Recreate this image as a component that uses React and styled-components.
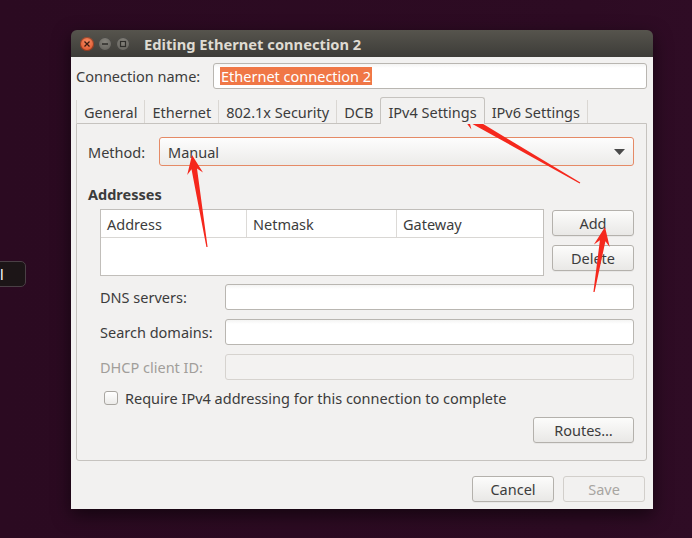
import React from "react";
import styled, { createGlobalStyle } from "styled-components";

const Global = createGlobalStyle`
  html, body { margin: 0; padding: 0; background: #2c0a22; }
  body { font-family: "Noto Sans", "DejaVu Sans", sans-serif; }
  * { box-sizing: border-box; }
`;

const Page = styled.div`
  position: relative;
  width: 692px;
  height: 538px;
  overflow: hidden;
  background: linear-gradient(90deg, #2b0a21 0%, #2d0b23 85%, #2f0c25 100%);
  padding: 30px 0 0 71px;
`;

const Window = styled.div`
  width: 582px;
  border-radius: 6px 6px 0 0;
  overflow: hidden;
  box-shadow: 0 6px 18px rgba(0, 0, 0, 0.55);
`;

const TitleBar = styled.div`
  height: 27px;
  display: flex;
  align-items: center;
  padding-left: 9px;
  background: linear-gradient(#56544d, #3d3c38);
  color: #dfdbd2;
  font-weight: 700;
  font-size: 14.7px;
`;

const WinButtons = styled.div`
  display: flex;
  gap: 4px;
  margin-right: 14px;
`;

const WinButton = styled.div`
  width: 14px;
  height: 14px;
  border-radius: 50%;
  display: flex;
  align-items: center;
  justify-content: center;
  background: ${(p) =>
    p.$close
      ? "radial-gradient(circle at 50% 35%, #f58a62, #d9491f)"
      : "radial-gradient(circle at 50% 35%, #85837c, #5c5a55)"};
  box-shadow: inset 0 0 0 1px rgba(0, 0, 0, 0.35);
  svg { display: block; }
`;

const Body = styled.div`
  background: #f2f1f0;
  padding: 6px 6px 7px 5px;
  color: #3c3c3c;
  font-size: 14.5px;
`;

const NameRow = styled.div`
  display: flex;
  align-items: center;
`;

const NameLabel = styled.div`
  width: 137px;
`;

const TextInput = styled.div`
  flex: 1;
  height: 26px;
  border: 1px solid ${(p) => (p.$disabled ? "#d6d3cf" : "#b9b6b1")};
  border-radius: 3px;
  background: ${(p) =>
    p.$disabled ? "#f3f2f1" : "linear-gradient(#f4f4f3, #ffffff 4px)"};
  display: flex;
  align-items: center;
  padding-left: 6px;
`;

const Selected = styled.span`
  background: #f07746;
  color: #ffffff;
  line-height: 18px;
  padding: 0 1px;
`;

const Notebook = styled.div`
  margin-top: 8px;
`;

const TabStrip = styled.div`
  display: flex;
  align-items: flex-end;
  height: 26px;
`;

const Tab = styled.div`
  height: ${(p) => (p.$active ? "27px" : "23px")};
  padding: ${(p) => (p.$active ? "2px" : "0")} 7px 0;
  display: flex;
  align-items: center;
  border-left: ${(p) =>
    p.$afterActive ? "none" : `1px solid ${p.$active ? "#c6c3bf" : "#dad7d3"}`};
  border-right: ${(p) =>
    p.$active ? "1px solid #c6c3bf" : p.$last ? "1px solid #dad7d3" : "none"};
  border-top: ${(p) => (p.$active ? "1px solid #c6c3bf" : "none")};
  border-radius: ${(p) => (p.$active ? "3px 3px 0 0" : "0")};
  background: #f2f1f0;
  margin-bottom: ${(p) => (p.$active ? "-1px" : "0")};
  position: relative;
  z-index: ${(p) => (p.$active ? 1 : 0)};
  white-space: nowrap;
`;

const Panel = styled.div`
  border: 1px solid #c6c3bf;
  border-radius: 0 0 3px 3px;
  background: #f2f1f0;
  padding: 13px 12px 16px 11px;
  height: 338px;
`;

const MethodRow = styled.div`
  display: flex;
  align-items: center;
`;

const MethodLabel = styled.div`
  width: 71px;
`;

const Combo = styled.div`
  flex: 1;
  height: 29px;
  border: 1px solid #e58a66;
  border-radius: 3px;
  background: linear-gradient(#fdfdfd, #ecebe9);
  display: flex;
  align-items: center;
  justify-content: space-between;
  padding: 0 8px 0 8px;
`;

const Heading = styled.div`
  font-weight: 700;
  margin-top: 19px;
  line-height: 18px;
`;

const Section = styled.div`
  padding-left: 12px;
`;

const AddrRow = styled.div`
  display: flex;
  gap: 8px;
  margin-top: 6px;
`;

const Table = styled.div`
  width: 444px;
  height: 67px;
  border: 1px solid #c1beba;
  background: #ffffff;
`;

const HeaderRow = styled.div`
  display: grid;
  grid-template-columns: 145px 150px 1fr;
  height: 28px;
  border-bottom: 1px solid #d9d7d4;
`;

const HeaderCell = styled.div`
  display: flex;
  align-items: center;
  padding-left: 6px;
  border-left: ${(p) => (p.$first ? "none" : "1px solid #dcdad7")};
`;

const SideButtons = styled.div`
  display: flex;
  flex-direction: column;
  gap: 9px;
  padding-top: 1px;
`;

const Button = styled.div`
  width: ${(p) => p.$w || 82}px;
  height: 26px;
  border: 1px solid ${(p) => (p.$disabled ? "#d2cfcb" : "#b4b1ac")};
  border-radius: 3px;
  background: ${(p) =>
    p.$disabled ? "#f2f1f0" : "linear-gradient(#fcfcfb, #e9e8e6)"};
  color: ${(p) => (p.$disabled ? "#a8a5a1" : "#3c3c3c")};
  display: flex;
  align-items: center;
  justify-content: center;
  box-shadow: ${(p) => (p.$disabled ? "none" : "0 1px 0 rgba(0,0,0,0.04)")};
`;

const FieldList = styled.div`
  display: flex;
  flex-direction: column;
  gap: 9px;
  margin-top: 8px;
`;

const FieldRow = styled.div`
  display: flex;
  align-items: center;
`;

const FieldLabel = styled.div`
  width: 125px;
  color: ${(p) => (p.$disabled ? "#a19e9a" : "#3c3c3c")};
`;

const CheckRow = styled.div`
  display: flex;
  align-items: center;
  gap: 7px;
  margin-top: 9px;
  padding-left: 4px;
  height: 18px;
`;

const CheckBox = styled.div`
  width: 14px;
  height: 14px;
  border: 1px solid #a9a6a1;
  border-radius: 3px;
  background: linear-gradient(#ffffff, #ecebe9);
`;

const RoutesRow = styled.div`
  display: flex;
  justify-content: flex-end;
  margin-top: 10px;
`;

const DialogButtons = styled.div`
  display: flex;
  justify-content: flex-end;
  gap: 9px;
  margin-top: 15px;
  padding-right: 2px;
`;

const Tooltip = styled.div`
  position: absolute;
  left: -40px;
  top: 261px;
  width: 66px;
  height: 26px;
  background: #1c1517;
  border: 1px solid #4a3f45;
  border-radius: 5px;
  color: #ffffff;
  display: flex;
  align-items: center;
  padding-left: 39px;
  font-size: 14px;
`;

const Overlay = styled.svg`
  position: absolute;
  left: 0;
  top: 0;
  pointer-events: none;
`;

function arrowPoints(tail, tip, opts = {}) {
  const { head = 19, barbW = 8, neck = 14, neckW = 2.8, tailW = 0.6 } = opts;
  const dx = tip[0] - tail[0];
  const dy = tip[1] - tail[1];
  const len = Math.hypot(dx, dy);
  const ux = dx / len;
  const uy = dy / len;
  const nx = -uy;
  const ny = ux;
  const at = (d, w) => [tip[0] - ux * d + nx * w, tip[1] - uy * d + ny * w];
  const pts = [
    [tail[0] + nx * tailW, tail[1] + ny * tailW],
    at(neck, neckW),
    at(head, barbW),
    tip,
    at(head, -barbW),
    at(neck, -neckW),
    [tail[0] - nx * tailW, tail[1] - ny * tailW],
  ];
  return pts.map((p) => p.map((v) => v.toFixed(1)).join(",")).join(" ");
}

const tabs = ["General", "Ethernet", "802.1x Security", "DCB", "IPv4 Settings", "IPv6 Settings"];

export default function App() {
  return (
    <>
      <Global />
      <Page>
        <Window>
          <TitleBar>
            <WinButtons>
              <WinButton $close>
                <svg width="8" height="8" viewBox="0 0 8 8">
                  <path d="M1.5 1.5 L6.5 6.5 M6.5 1.5 L1.5 6.5" stroke="#3a1a10" strokeWidth="1.3" />
                </svg>
              </WinButton>
              <WinButton>
                <svg width="8" height="8" viewBox="0 0 8 8">
                  <path d="M1 4 H7" stroke="#2e2d2a" strokeWidth="1.3" />
                </svg>
              </WinButton>
              <WinButton>
                <svg width="8" height="8" viewBox="0 0 8 8">
                  <rect x="1.5" y="1.5" width="5" height="5" fill="none" stroke="#2e2d2a" strokeWidth="1.2" />
                </svg>
              </WinButton>
            </WinButtons>
            Editing Ethernet connection 2
          </TitleBar>
          <Body>
            <NameRow>
              <NameLabel>Connection name:</NameLabel>
              <TextInput>
                <Selected>Ethernet connection 2</Selected>
              </TextInput>
            </NameRow>
            <Notebook>
              <TabStrip>
                {tabs.map((t, i) => (
                  <Tab
                    key={t}
                    $active={t === "IPv4 Settings"}
                    $afterActive={i > 0 && tabs[i - 1] === "IPv4 Settings"}
                    $last={i === tabs.length - 1}
                  >
                    {t}
                  </Tab>
                ))}
              </TabStrip>
              <Panel>
                <MethodRow>
                  <MethodLabel>Method:</MethodLabel>
                  <Combo>
                    <span>Manual</span>
                    <svg width="11" height="6" viewBox="0 0 11 6">
                      <path d="M0 0 H11 L5.5 6 Z" fill="#4a4a4a" />
                    </svg>
                  </Combo>
                </MethodRow>
                <Heading>Addresses</Heading>
                <Section>
                  <AddrRow>
                    <Table>
                      <HeaderRow>
                        <HeaderCell $first>Address</HeaderCell>
                        <HeaderCell>Netmask</HeaderCell>
                        <HeaderCell>Gateway</HeaderCell>
                      </HeaderRow>
                    </Table>
                    <SideButtons>
                      <Button>Add</Button>
                      <Button>Delete</Button>
                    </SideButtons>
                  </AddrRow>
                  <FieldList>
                    <FieldRow>
                      <FieldLabel>DNS servers:</FieldLabel>
                      <TextInput />
                    </FieldRow>
                    <FieldRow>
                      <FieldLabel>Search domains:</FieldLabel>
                      <TextInput />
                    </FieldRow>
                    <FieldRow>
                      <FieldLabel $disabled>DHCP client ID:</FieldLabel>
                      <TextInput $disabled />
                    </FieldRow>
                  </FieldList>
                  <CheckRow>
                    <CheckBox />
                    <span>Require IPv4 addressing for this connection to complete</span>
                  </CheckRow>
                </Section>
                <RoutesRow>
                  <Button $w={101}>Routes…</Button>
                </RoutesRow>
              </Panel>
            </Notebook>
            <DialogButtons>
              <Button>Cancel</Button>
              <Button $disabled>Save</Button>
            </DialogButtons>
          </Body>
        </Window>
        <Tooltip>l</Tooltip>
        <Overlay width="692" height="538" viewBox="0 0 692 538">
          <polygon points={arrowPoints([580, 183], [459, 113])} fill="#f5281d" />
          <polygon points={arrowPoints([207, 247], [192, 155])} fill="#f5281d" />
          <polygon points={arrowPoints([594, 292], [605, 227])} fill="#f5281d" />
        </Overlay>
      </Page>
    </>
  );
}
